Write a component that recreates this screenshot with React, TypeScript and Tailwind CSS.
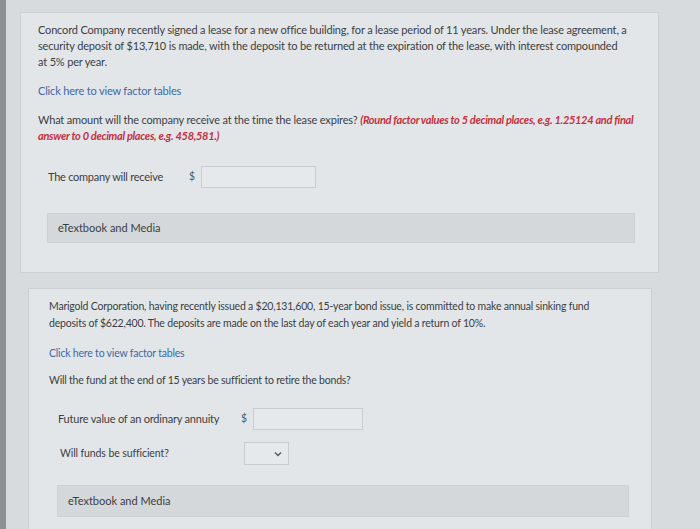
import React from "react";

const font = { fontFamily: "Lato, 'Open Sans', sans-serif" };

function DollarInput({ width }: { width: string }) {
  return (
    <div className="flex items-center gap-[6px]">
      <span className="text-[10.5px] text-[#55595e]">$</span>
      <div className={`${width} h-[22px] border border-[#c9ccd0] bg-[#e6e9ec]`} />
    </div>
  );
}

export default function App() {
  return (
    <div
      className="relative w-[700px] h-[529px] overflow-hidden bg-[#d8dbde] text-[#3b3e43]"
      style={font}
    >
      <div className="absolute left-0 top-0 w-[6px] h-full bg-[#8d9095]" />
      <div className="pl-[20px] pt-[12px]">
        <div className="w-[639px] h-[261px] border border-[#cdd0d3] bg-[#e3e6e9] pl-[17px] pr-[8px] pt-[9px]">
          <p className="text-[11px] leading-[16px] tracking-[-0.17px] whitespace-nowrap">
            Concord Company recently signed a lease for a new office building, for a lease period of 11 years. Under the lease agreement, a
            <br />
            security deposit of $13,710 is made, with the deposit to be returned at the expiration of the lease, with interest compounded
            <br />
            at 5% per year.
          </p>
          <p className="mt-[13px] text-[11px] leading-[16px] text-[#3d69a6] tracking-[-0.17px]">Click here to view factor tables</p>
          <p className="mt-[13px] text-[11px] leading-[16px] tracking-[-0.17px] whitespace-nowrap">
            What amount will the company receive at the time the lease expires?{" "}
            <span className="italic font-bold text-[#c2303e] tracking-[-0.3px]">
              (Round factor values to 5 decimal places, e.g. 1.25124 and final
              <br />
              answer to 0 decimal places, e.g. 458,581.)
            </span>
          </p>
          <div className="mt-[22px] flex items-center pl-[10px]">
            <span className="w-[141px] text-[11px] tracking-[-0.25px]">The company will receive</span>
            <DollarInput width="w-[115px]" />
          </div>
          <div className="mt-[25px] ml-[9px] w-[588px] h-[30px] bg-[#d5d8db] border border-[#cfd2d5] flex items-center pl-[10px] text-[11px]">
            eTextbook and Media
          </div>
        </div>
      </div>
      <div className="pl-[28px] pt-[15px]">
        <div className="w-[624px] h-[260px] border border-[#cdd0d3] bg-[#e3e6e9] pl-[20px] pr-[10px] pt-[9px]">
          <p className="text-[10.5px] leading-[17px] tracking-[-0.2px] whitespace-nowrap">
            Marigold Corporation, having recently issued a $20,131,600, 15-year bond issue, is committed to make annual sinking fund
            <br />
            deposits of $622,400. The deposits are made on the last day of each year and yield a return of 10%.
          </p>
          <p className="mt-[13px] text-[10.5px] leading-[17px] text-[#3d69a6] tracking-[-0.2px]">Click here to view factor tables</p>
          <p className="mt-[10px] text-[10.5px] leading-[17px] tracking-[-0.2px]">
            Will the fund at the end of 15 years be sufficient to retire the bonds?
          </p>
          <div className="mt-[19px] flex items-center pl-[9px]">
            <span className="w-[183px] text-[11px] tracking-[-0.2px]">Future value of an ordinary annuity</span>
            <DollarInput width="w-[110px]" />
          </div>
          <div className="mt-[12px] flex items-center pl-[11px]">
            <span className="w-[184px] text-[10.5px] tracking-[-0.1px]">Will funds be sufficient?</span>
            <div className="w-[45px] h-[23px] border border-[#c9ccd0] bg-[#e6e9ec] flex items-center justify-end pr-[6px]">
              <svg width="8" height="6" viewBox="0 0 8 6">
                <path d="M1 1.5 L4 4.5 L7 1.5" fill="none" stroke="#55595e" strokeWidth="1.4" />
              </svg>
            </div>
          </div>
          <div className="mt-[20px] ml-[8px] w-[572px] h-[32px] bg-[#d5d8db] border border-[#cfd2d5] flex items-center pl-[10px] text-[11px]">
            eTextbook and Media
          </div>
        </div>
      </div>
    </div>
  );
}
